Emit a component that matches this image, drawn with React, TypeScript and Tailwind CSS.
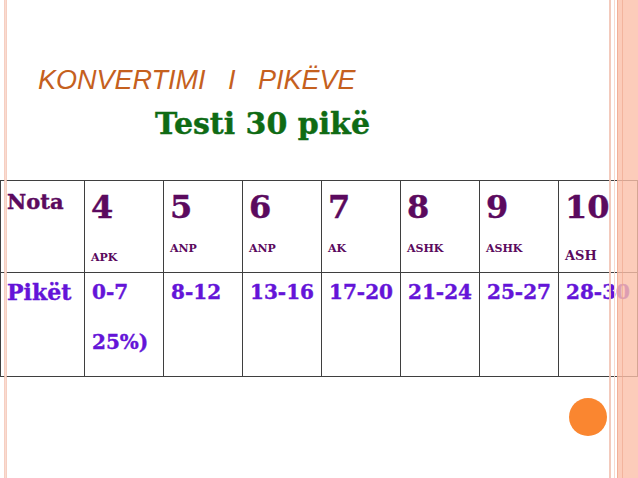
import React from "react";

const serif = "font-['DejaVu_Serif','Liberation_Serif',serif]";
const heavy = "[-webkit-text-stroke:0.4px_currentColor]";

const head = [
  { n: "4", l: "APK", mt: "mt-[29px]", ls: "text-[11px]" },
  { n: "5", l: "ANP", mt: "mt-[20px]", ls: "text-[11px]" },
  { n: "6", l: "ANP", mt: "mt-[20px]", ls: "text-[11px]" },
  { n: "7", l: "AK", mt: "mt-[20px]", ls: "text-[11px]" },
  { n: "8", l: "ASHK", mt: "mt-[20px]", ls: "text-[11px]" },
  { n: "9", l: "ASHK", mt: "mt-[20px]", ls: "text-[11px]" },
  { n: "10", l: "ASH", mt: "mt-[26px]", ls: "text-[13px]" },
];

const body = ["0-7", "8-12", "13-16", "17-20", "21-24", "25-27", "28-30"];

export default function App() {
  return (
    <div className="relative w-[638px] h-[478px] bg-white overflow-hidden">
      <div className="flex flex-col">
        <div className="pt-[67px] pl-[38px] font-['Liberation_Sans',Arial,sans-serif] italic text-[27px] leading-none text-[#c5601e] whitespace-pre">
          {"KONVERTIMI   I   PIKËVE"}
        </div>
        <div className={`pl-[155px] mt-[15px] ${serif} ${heavy} font-bold text-[30px] leading-none text-[#0f6b14]`}>
          Testi 30 pikë
        </div>
        <div className="mt-[41px] grid grid-cols-[85px_repeat(7,79px)] grid-rows-[91px_104px] border-t border-b border-[#3f3f3f]">
          <div className={`border-l border-r border-[#3f3f3f] pl-[6px] pt-[10px] ${serif} ${heavy} font-bold text-[21px] leading-none text-[#5b0a5e]`}>
            Nota
          </div>
          {head.map((h, i) => (
            <div
              key={i}
              className={`border-r border-[#3f3f3f] pl-[6px] pt-[10px] ${serif} font-bold text-[#5b0a5e] flex flex-col`}
            >
              <div className={`text-[32px] leading-none ${heavy}`}>{h.n}</div>
              <div className={`${h.mt} ${h.ls} leading-none`}>{h.l}</div>
            </div>
          ))}
          <div className={`border-l border-r border-t border-[#3f3f3f] pl-[6px] pt-[8px] ${serif} ${heavy} font-bold text-[22px] leading-none text-[#6414d8]`}>
            Pikët
          </div>
          {body.map((b, i) => (
            <div
              key={i}
              className={`border-r border-t border-[#3f3f3f] pl-[7px] pt-[9px] ${serif} ${heavy} font-bold text-[20px] leading-none text-[#6414d8] flex flex-col`}
            >
              <div>{b}</div>
              {i === 0 && <div className="mt-[30px]">25%)</div>}
            </div>
          ))}
        </div>
      </div>

      {/* left decorative stripe */}
      <div className="absolute left-[4px] top-0 w-[3px] h-full bg-[#f3c3b3] opacity-80" />
      <div className="absolute left-[5px] top-0 w-px h-full bg-[#fadbd0]" />

      {/* right decorative stripes */}
      <div className="absolute left-[609px] top-0 w-[2px] h-full bg-[#f2c4b5] opacity-90" />
      <div className="absolute left-[614px] top-0 w-px h-full bg-[#f7d5ca] opacity-90" />
      <div className="absolute left-[617px] top-0 w-[21px] h-full bg-[#fbbfa9] opacity-80" />
      <div className="absolute left-[617px] top-0 w-px h-full bg-[#eca48b] opacity-70" />
      <div className="absolute left-[622px] top-0 w-px h-full bg-[#eca48b] opacity-60" />

      {/* orange dot */}
      <div className="absolute left-[569px] top-[398px] w-[38px] h-[38px] rounded-full bg-[#fa8630]" />
    </div>
  );
}
